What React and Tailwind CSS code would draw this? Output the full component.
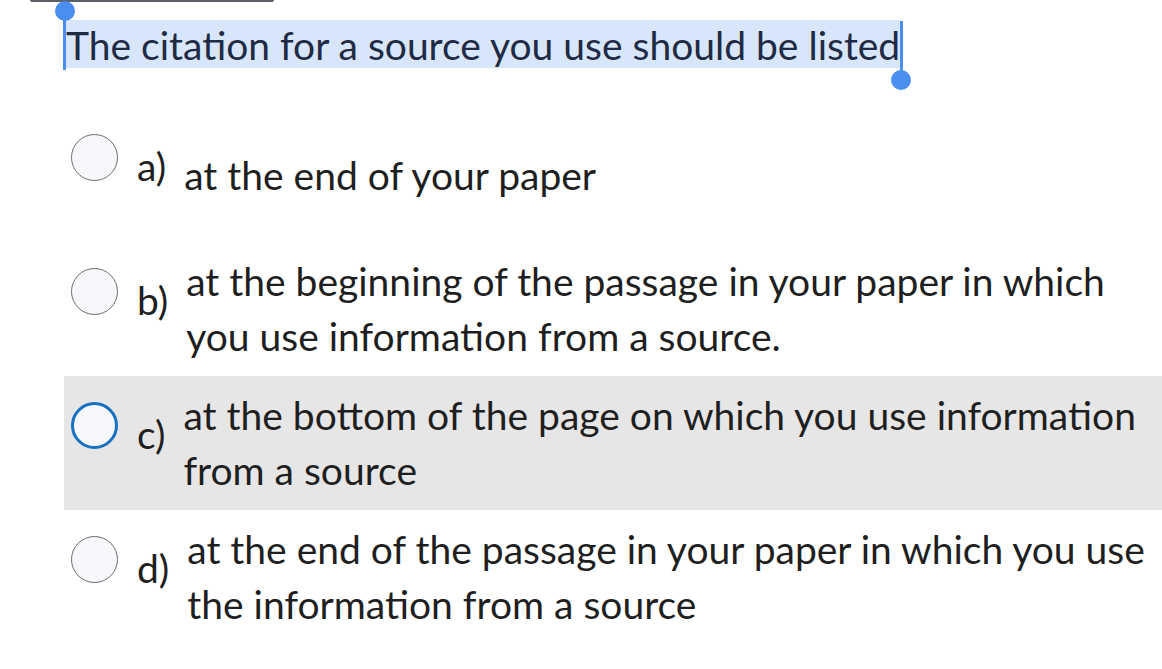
import React from "react";

const options = [
  { key: "a", label: "a)", lines: ["at the end of your paper"] },
  {
    key: "b",
    label: "b)",
    lines: ["at the beginning of the passage in your paper in which", "you use information from a source."],
  },
  {
    key: "c",
    label: "c)",
    lines: ["at the bottom of the page on which you use information", "from a source"],
    selected: true,
  },
  {
    key: "d",
    label: "d)",
    lines: ["at the end of the passage in your paper in which you use", "the information from a source"],
  },
];

function Option({ label, lines, selected }) {
  return (
    <div className={`flex h-[134px] items-center pl-[7px] ${selected ? "bg-[#e6e6e6]" : ""}`}>
      <div
        className={`mb-[36px] h-[47px] w-[47px] shrink-0 rounded-full bg-[#f5f7fb] ${
          selected ? "border-[3px] border-[#1770c2]" : "border-[1.5px] border-[#6d6d6d]"
        }`}
      />
      <div className="ml-[19px] mr-[18px] mb-[18px] leading-[55px] text-[#1f1f1f]">{label}</div>
      <div className="leading-[55px] text-[#1f1f1f]">
        {lines.map((l, i) => (
          <div key={i}>{l}</div>
        ))}
      </div>
    </div>
  );
}

export default function App() {
  return (
    <div className="relative h-[669px] w-[1162px] overflow-hidden bg-white font-['Lato',sans-serif] text-[39px]">
      {/* toolbar remnant at the top */}
      <div className="absolute left-[30px] top-0 h-[2px] w-[244px] rounded-b bg-[#5b6066]" />

      <div className="pl-[66px] pt-[21px] leading-[49px]">
        <div className="relative inline-block">
          <span className="bg-[#d8e6fb] pt-[2px] text-[#1f2a44]">
            The citation for a source you use should be listed
          </span>
          {/* selection handles */}
          <div className="absolute -left-[3px] -top-[10px] h-[59px] w-[3px] bg-[#4a8ef0]" />
          <div className="absolute -left-[11px] -top-[20px] h-[20px] w-[20px] rounded-full bg-[#4a8ef0]" />
          <div className="absolute -right-[3px] top-0 h-[59px] w-[3px] bg-[#4a8ef0]" />
          <div className="absolute -right-[11px] top-[49px] h-[20px] w-[20px] rounded-full bg-[#4a8ef0]" />
        </div>
      </div>

      <div className="ml-[64px] mt-[38px]">
        {options.map((o) => (
          <Option key={o.key} {...o} />
        ))}
      </div>
    </div>
  );
}
